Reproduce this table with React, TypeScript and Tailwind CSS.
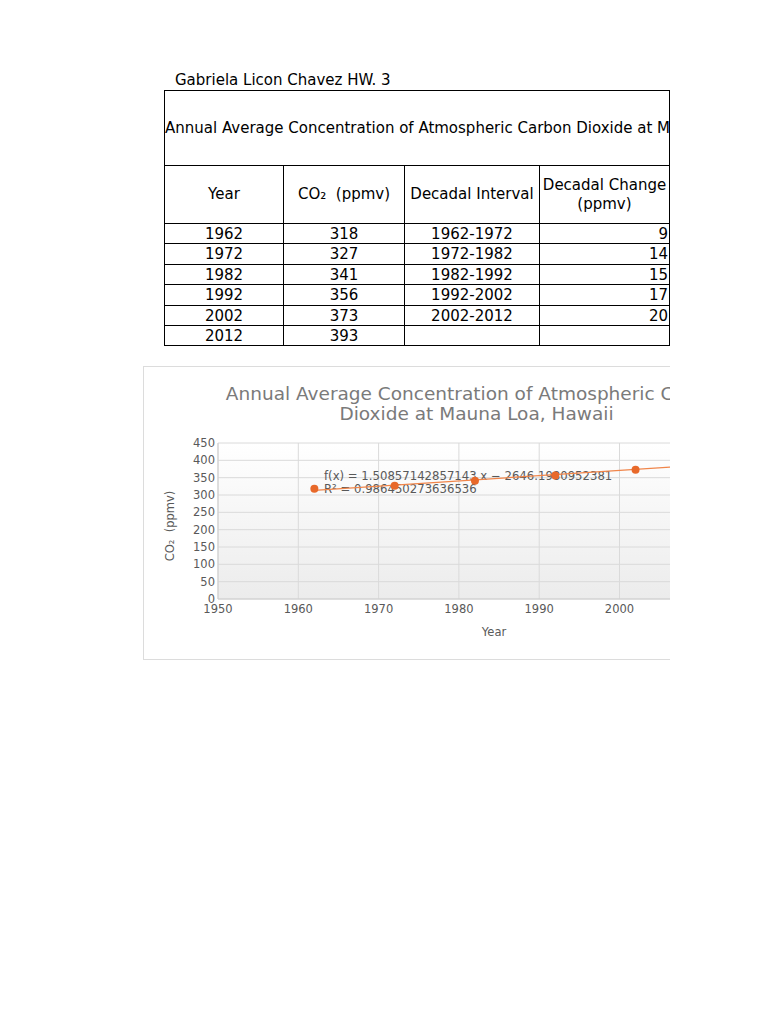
import React from "react";

const font = { fontFamily: '"DejaVu Sans", "Liberation Sans", sans-serif' };

const rows = [
  { y: "1962", c: "318", i: "1962-1972", d: "9", h: "h-[20px]" },
  { y: "1972", c: "327", i: "1972-1982", d: "14", h: "h-[21px]" },
  { y: "1982", c: "341", i: "1982-1992", d: "15", h: "h-[20px]" },
  { y: "1992", c: "356", i: "1992-2002", d: "17", h: "h-[21px]" },
  { y: "2002", c: "373", i: "2002-2012", d: "20", h: "h-[20px]" },
  { y: "2012", c: "393", i: "", d: "", h: "h-[20px]" },
];

const OX = 144;
const OY = 424;
const X = (year: number) => 218 + (year - 1950) * 8.03 - OX;
const Y = (v: number) => 599 - (v * 156) / 450 - OY;

function Chart() {
  const pts: [number, number][] = [
    [1962, 318],
    [1972, 327],
    [1982, 341],
    [1992, 356],
    [2002, 373],
    [2012, 393],
  ];
  const f = (x: number) => 1.50857142857143 * x - 2646.1980952381;
  const plotL = X(1950);
  const plotR = 770 - OX;
  const plotT = Y(450);
  const plotB = Y(0);
  const yTicks = [0, 50, 100, 150, 200, 250, 300, 350, 400, 450];
  const xTicks = [1950, 1960, 1970, 1980, 1990, 2000, 2010];
  return (
    <svg width={665} height={234} className="block" style={font}>
      <defs>
        <linearGradient id="bg" x1="0" y1="0" x2="0" y2="1">
          <stop offset="0" stopColor="#ffffff" />
          <stop offset="1" stopColor="#ececec" />
        </linearGradient>
      </defs>
      <rect x={plotL} y={plotT} width={plotR - plotL} height={plotB - plotT} fill="url(#bg)" />
      {yTicks.map((v) => (
        <line key={v} x1={plotL} x2={plotR} y1={Y(v)} y2={Y(v)} stroke="#dadada" strokeWidth={1} />
      ))}
      {xTicks.map((t) => (
        <line key={t} x1={X(t)} x2={X(t)} y1={plotT} y2={plotB} stroke="#dadada" strokeWidth={1} />
      ))}
      <line x1={plotL} x2={plotL} y1={plotT} y2={plotB} stroke="#cfcfcf" />
      <line x1={plotL} x2={plotR} y1={plotB} y2={plotB} stroke="#cfcfcf" />
      {yTicks.map((v) => (
        <text key={v} x={215 - OX} y={Y(v)} textAnchor="end" dominantBaseline="central" fontSize={11.5} fill="#595959">
          {v}
        </text>
      ))}
      {xTicks.map((t) => (
        <text key={t} x={X(t)} y={609 - OY} textAnchor="middle" dominantBaseline="central" fontSize={11.5} fill="#595959">
          {t}
        </text>
      ))}
      <text x={494 - OX} y={632 - OY} textAnchor="middle" dominantBaseline="central" fontSize={11.5} fill="#595959">
        Year
      </text>
      <text
        x={0}
        y={0}
        transform={`translate(${170 - OX} ${526 - OY}) rotate(-90)`}
        textAnchor="middle"
        dominantBaseline="central"
        fontSize={11.5}
        fill="#595959"
        style={{ whiteSpace: "pre" }}
      >
        {"CO₂  (ppmv)"}
      </text>
      <text x={324 - OX} y={476 - OY} dominantBaseline="central" fontSize={11.7} fill="#595959">
        f(x) = 1.50857142857143 x − 2646.1980952381
      </text>
      <text x={324 - OX} y={489 - OY} dominantBaseline="central" fontSize={11.7} fill="#595959">
        R² = 0.986450273636536
      </text>
      <line x1={X(1962)} y1={Y(f(1962))} x2={X(2012)} y2={Y(f(2012))} stroke="#f0854a" strokeWidth={1.3} />
      {pts.map(([a, b]) => (
        <circle key={a} cx={X(a)} cy={Y(b)} r={4} fill="#e8692a" />
      ))}
    </svg>
  );
}

export default function App() {
  return (
    <div className="w-full h-[1024px] bg-white text-black" style={font}>
      <div className="ml-[143px] w-[527px] overflow-hidden pt-[71px]">
        <div className="pl-[32px] text-[15px] leading-[18px] h-[19px] whitespace-nowrap">Gabriela Licon Chavez HW. 3</div>
        <div className="ml-[21px] w-[506px] border-l border-t border-black text-[15px]">
          <div className="h-[75px] border-b border-r border-black flex items-center whitespace-nowrap">
            <span className="leading-[18px]">Annual Average Concentration of Atmospheric Carbon Dioxide at Mauna Loa, Hawaii</span>
          </div>
          <div className="grid grid-cols-[119px_121px_135px_130px] h-[58px]">
            <div className="border-b border-r border-black flex items-center justify-center">Year</div>
            <div className="border-b border-r border-black flex items-center justify-center whitespace-pre">{"CO₂  (ppmv)"}</div>
            <div className="border-b border-r border-black flex items-center justify-center whitespace-nowrap">Decadal Interval</div>
            <div className="border-b border-r border-black flex items-center justify-center text-center leading-[19px] whitespace-nowrap">
              Decadal Change
              <br />
              (ppmv)
            </div>
          </div>
          {rows.map((r) => (
            <div key={r.y} className={`grid grid-cols-[119px_121px_135px_130px] ${r.h} leading-[18px]`}>
              <div className="border-b border-r border-black flex items-center justify-center">{r.y}</div>
              <div className="border-b border-r border-black flex items-center justify-center">{r.c}</div>
              <div className="border-b border-r border-black flex items-center justify-center">{r.i}</div>
              <div className="border-b border-r border-black flex items-center justify-end pr-[1px]">{r.d}</div>
            </div>
          ))}
        </div>
        <div className="mt-[20px] w-[667px] h-[294px] border border-[#dcdcdc]">
          <div className="pt-[17px] h-[57px] text-center text-[18.5px] leading-[20px] text-[#7a7a7a] whitespace-nowrap">
            Annual Average Concentration of Atmospheric Carbon
            <br />
            Dioxide at Mauna Loa, Hawaii
          </div>
          <Chart />
        </div>
      </div>
    </div>
  );
}
